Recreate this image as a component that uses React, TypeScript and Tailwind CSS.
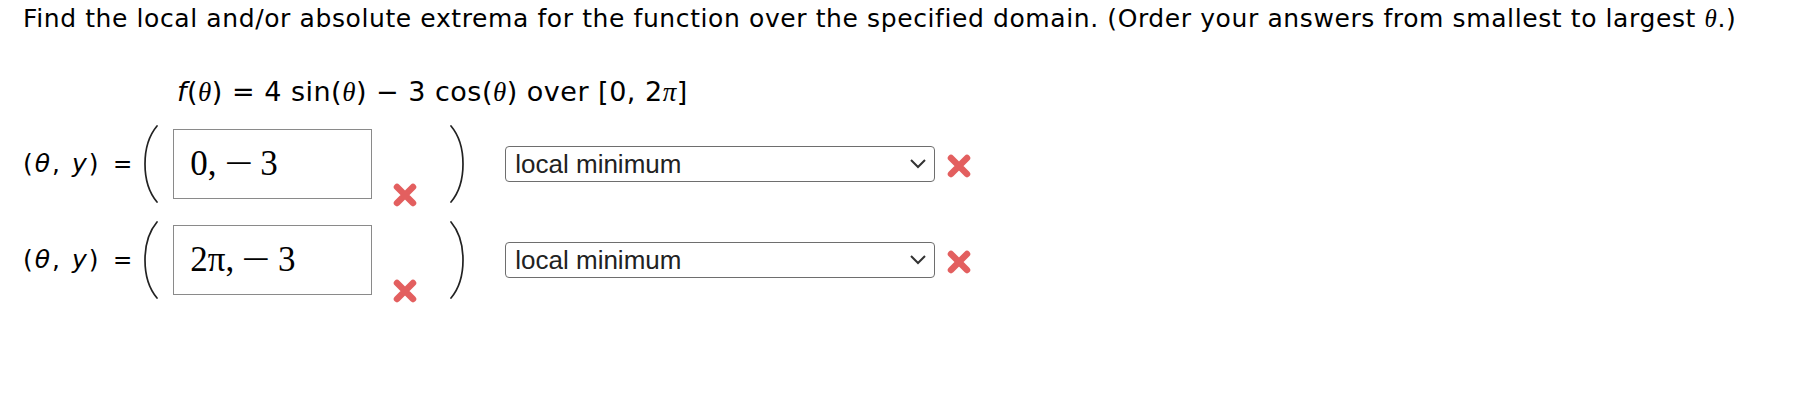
const SANS = "font-['DejaVu_Sans','Verdana',sans-serif]";

function Var({ children }: { children: React.ReactNode }) {
  return (
    <span className="font-['Liberation_Serif','Times_New_Roman',serif] italic">
      {children}
    </span>
  );
}

function Paren({ side }: { side: "left" | "right" }) {
  const d =
    side === "left"
      ? "M16 1 C 0 20, 0 58, 16 77"
      : "M2 1 C 18 20, 18 58, 2 77";
  return (
    <svg width="18" height="78" viewBox="0 0 18 78" aria-hidden>
      <path d={d} fill="none" stroke="#222" strokeWidth="1.7" strokeLinecap="round" />
    </svg>
  );
}

function WrongMark({ className = "" }: { className?: string }) {
  return (
    <svg
      width="26"
      height="26"
      viewBox="0 0 26 26"
      className={className}
      aria-label="incorrect"
    >
      <path
        d="M5 5 L21 21 M21 5 L5 21"
        stroke="#e35f5f"
        strokeWidth="6.5"
        strokeLinecap="round"
      />
    </svg>
  );
}

function Minus() {
  return <span className="mx-[12px] inline-block scale-x-[1.45]">−</span>;
}

function AnswerRow({
  value,
  choice,
  className = "",
}: {
  value: React.ReactNode;
  choice: string;
  className?: string;
}) {
  return (
    <div className={`flex h-[78px] items-center ${className}`}>
      <span className={`${SANS} w-[90px] whitespace-nowrap text-[25px] tracking-[2px] text-black`}>
        (<span className="italic">θ</span>, <span className="italic">y</span>)
      </span>
      <span className={`${SANS} text-[23px] text-black`}>=</span>
      <div className="ml-[9px] flex items-center">
        <Paren side="left" />
        <div className="ml-[14px] flex h-[70px] w-[199px] items-center border-[1.5px] border-[#8a8a8a] pl-[16px] font-['Liberation_Serif','Times_New_Roman',serif] text-[35px] text-black">
          {value}
        </div>
        <WrongMark className="ml-[20px] mt-[62px]" />
        <div className="ml-[31px]">
          <Paren side="right" />
        </div>
      </div>
      <div className="ml-[38px] flex h-[36px] w-[430px] items-center justify-between rounded-[4px] border-[1.5px] border-[#6e6e6e] pl-[9px] pr-[7px] font-['Liberation_Sans','Arial',sans-serif] text-[26px] text-[#222]">
        <span>{choice}</span>
        <svg width="18" height="12" viewBox="0 0 18 12" aria-hidden>
          <path d="M2 2 L9 9 L16 2" fill="none" stroke="#333" strokeWidth="2" />
        </svg>
      </div>
      <WrongMark className="ml-[11px] mt-[4px]" />
    </div>
  );
}

export default function App() {
  return (
    <div className="min-h-[414px] w-[1794px] bg-white pl-[23px] pt-[1px] text-black">
      <p className={`${SANS} text-[25px] leading-[36px] tracking-[0.6px]`}>
        Find the local and/or absolute extrema for the function over the specified domain.
        (Order your answers from smallest to largest <Var>θ</Var>.)
      </p>

      <p className={`${SANS} mt-[37px] pl-[154px] text-[27px] leading-[36px] tracking-[0.5px]`}>
        <span className="italic">f</span>(<Var>θ</Var>) = 4 sin(<Var>θ</Var>) − 3 cos(
        <Var>θ</Var>) over [0, 2<Var>π</Var>]
      </p>

      <AnswerRow
        className="mt-[15px]"
        value={
          <>
            0,
            <Minus />3
          </>
        }
        choice="local minimum"
      />
      <AnswerRow
        className="mt-[18px]"
        value={
          <>
            2π,
            <Minus />3
          </>
        }
        choice="local minimum"
      />
    </div>
  );
}
